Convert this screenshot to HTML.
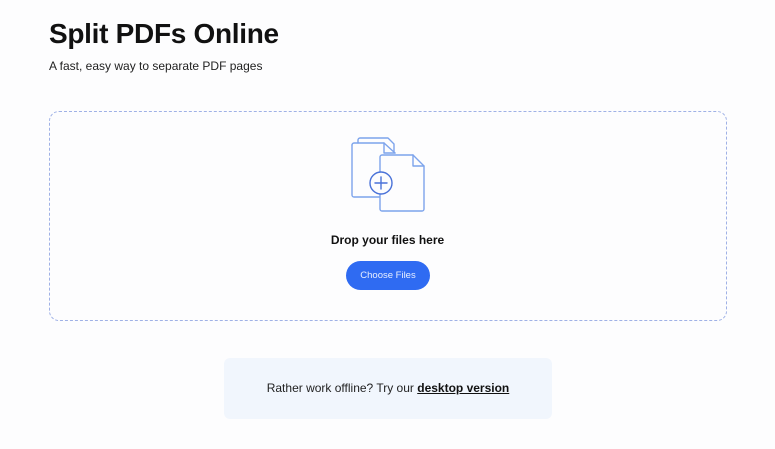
<!DOCTYPE html>
<html><head><style>
body{margin:0;width:775px;height:449px;background:#fdfdfe;font-family:"Liberation Sans",sans-serif;position:relative;overflow:hidden}
h1{position:absolute;left:49px;top:18px;margin:0;font-size:28px;font-weight:bold;color:#111;letter-spacing:-0.3px}
.sub{position:absolute;left:49px;top:59px;font-size:12px;color:#222}
.box{position:absolute;left:49px;top:111px;width:676px;height:208px;border:1.5px dashed #9fb1e6;border-radius:10px}
.drop{position:absolute;left:0;width:775px;top:233px;text-align:center;font-size:12px;font-weight:bold;color:#111}
.btn{position:absolute;left:346px;top:261px;width:84px;height:29px;border-radius:15px;background:#2f6bf2;color:#e8efff;font-size:9.5px;text-align:center;line-height:29px}
.off{position:absolute;left:224px;top:358px;width:328px;height:61px;background:#f1f6fd;border-radius:6px;text-align:center;line-height:61px;font-size:12px;color:#222}
.off b{text-decoration:underline;color:#111}
</style></head><body>
<h1>Split PDFs Online</h1>
<div class="sub">A fast, easy way to separate PDF pages</div>
<div class="box"></div>
<svg style="position:absolute;left:340px;top:130px" width="100" height="90" viewBox="340 130 100 90" fill="none" stroke="#7da4ec" stroke-width="1.4" stroke-linejoin="round" stroke-linecap="round">
<path d="M358 143v-3a2 2 0 0 1 2-2h28l6 6v8"/>
<path d="M352 145a2 2 0 0 1 2-2h30l11 10"/>
<path d="M352 145v50a2 2 0 0 0 2 2h26"/>
<path d="M384 143v10h11"/>
<path d="M382 155h31l11 11v43a2 2 0 0 1-2 2h-40a2 2 0 0 1-2-2v-52a2 2 0 0 1 2-2z" fill="#fdfdfe"/>
<path d="M413 155v11h11"/>
<circle cx="381" cy="183" r="11" fill="#fdfdfe" stroke="#4a72d8"/>
<path d="M381 177v12M375 183h12" stroke="#4a72d8"/>
</svg>
<div class="drop">Drop your files here</div>
<div class="btn">Choose Files</div>
<div class="off">Rather work offline? Try our <b>desktop version</b></div>
</body></html>
